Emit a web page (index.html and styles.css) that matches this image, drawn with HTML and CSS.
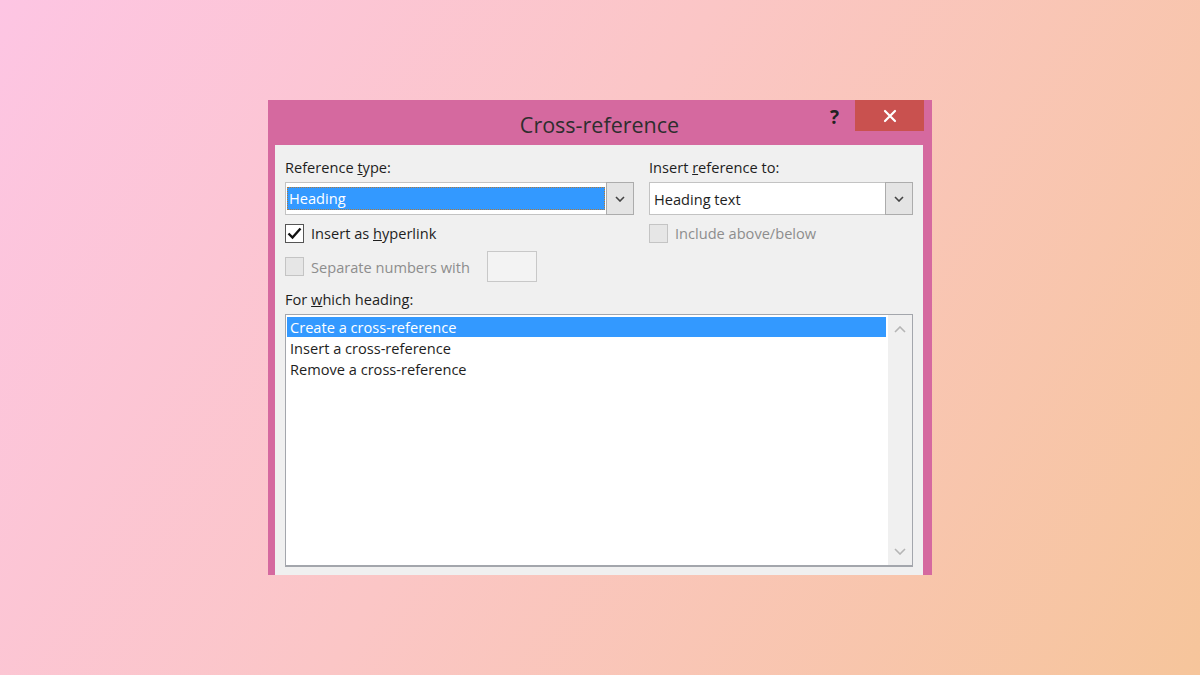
FILE: index.html
```html
<!DOCTYPE html>
<html lang="en">

<head>
  <meta charset="UTF-8">
  <meta name="viewport" content="width=device-width, initial-scale=1.0">
  <title>Cross-reference</title>
  <link rel="stylesheet" href="styles.css">
</head>

<body>
  <div class="dialog">
    <!-- Title bar -->
    <div class="title-bar">
      <span class="title">Cross-reference</span>
      <span class="help-btn">?</span>
      <span class="close-btn">
        <svg width="14" height="14" viewBox="0 0 14 14">
          <path d="M2 2 L12 12 M12 2 L2 12" stroke="#fff" stroke-width="2.2" stroke-linecap="round" />
        </svg>
      </span>
    </div>

    <div class="dialog-body">
      <div class="top-row">
        <div class="col col-left">
          <label class="field-label">Reference <u>t</u>ype:</label>
          <div class="combo">
            <div class="combo-value selected"><span>Heading</span></div>
            <div class="combo-btn">
              <svg width="10" height="6" viewBox="0 0 10 6">
                <path d="M1 1 L5 5 L9 1" fill="none" stroke="#444" stroke-width="1.6" />
              </svg>
            </div>
          </div>
          <div class="check-row">
            <span class="checkbox checked">
              <svg width="15" height="13" viewBox="0 0 15 13">
                <path d="M1.5 6.5 L5.5 10.5 L13.5 1.5" fill="none" stroke="#111" stroke-width="2.4" />
              </svg>
            </span>
            <span class="check-text">Insert as <u>h</u>yperlink</span>
          </div>
          <div class="check-row sep-row">
            <span class="checkbox disabled"></span>
            <span class="check-text muted">Separate numbers with</span>
            <span class="sep-input"></span>
          </div>
        </div>

        <div class="col col-right">
          <label class="field-label">Insert <u>r</u>eference to:</label>
          <div class="combo">
            <div class="combo-value">Heading text</div>
            <div class="combo-btn">
              <svg width="10" height="6" viewBox="0 0 10 6">
                <path d="M1 1 L5 5 L9 1" fill="none" stroke="#444" stroke-width="1.6" />
              </svg>
            </div>
          </div>
          <div class="check-row">
            <span class="checkbox disabled"></span>
            <span class="check-text muted">Include above/below</span>
          </div>
        </div>
      </div>

      <label class="field-label list-label">For <u>w</u>hich heading:</label>
      <div class="listbox">
        <ul class="list-items">
          <li class="active">Create a cross-reference</li>
          <li>Insert a cross-reference</li>
          <li>Remove a cross-reference</li>
        </ul>
        <div class="scrollbar">
          <svg width="12" height="7" viewBox="0 0 12 7">
            <path d="M1 6 L6 1 L11 6" fill="none" stroke="#b5b5b5" stroke-width="1.6" />
          </svg>
          <svg width="12" height="7" viewBox="0 0 12 7">
            <path d="M1 1 L6 6 L11 1" fill="none" stroke="#b5b5b5" stroke-width="1.6" />
          </svg>
        </div>
      </div>
    </div>
  </div>
</body>

</html>
```

FILE: styles.css
```css
/* General Styles */
body {
  font-family: 'Open Sans', 'Noto Sans', sans-serif;
  margin: 0;
  height: 675px;
  background: linear-gradient(120deg, #fdc5e3 0%, #fbc6c6 45%, #f6c59b 100%);
  display: flex;
  justify-content: center;
  align-items: center;
  overflow: hidden;
}

.dialog {
  width: 664px;
  height: 475px;
  background-color: #d5699f;
  display: flex;
  flex-direction: column;
  padding: 0 9px 0 7px;
  box-sizing: border-box;
}

/* Title bar */
.title-bar {
  height: 45px;
  position: relative;
  display: flex;
  justify-content: center;
  align-items: center;
  flex-shrink: 0;
}

.title {
  font-size: 21.5px;
  color: #2e2e2e;
  margin-top: 3px;
  margin-left: 1px;
}

.help-btn {
  position: absolute;
  right: 84px;
  top: 4px;
  font-size: 19px;
  font-weight: bold;
  color: #222;
}

.close-btn {
  position: absolute;
  right: -1px;
  top: 0;
  width: 69px;
  height: 31px;
  background-color: #c9514f;
  display: flex;
  justify-content: center;
  align-items: center;
}

/* Body */
.dialog-body {
  flex: 1;
  background-color: #f0f0f0;
  padding: 12px 10px 0 10px;
  display: flex;
  flex-direction: column;
  font-size: 14.6px;
  color: #1e1e1e;
}

.top-row {
  display: flex;
  gap: 15px;
}

.col {
  display: flex;
  flex-direction: column;
}

.col-left {
  width: 349px;
}

.col-right {
  flex: 1;
}

.field-label {
  height: 20px;
  line-height: 20px;
  margin-bottom: 5px;
}

/* Combo boxes */
.combo {
  height: 33px;
  display: flex;
  border: 1px solid #c3c3c3;
  background-color: #fff;
  box-sizing: border-box;
}

.combo-value {
  flex: 1;
  display: flex;
  align-items: center;
  padding-left: 4px;
}

.combo-value.selected {
  padding: 4px 1px;
}

.combo-value.selected span {
  display: block;
  width: 100%;
  height: 100%;
  line-height: 22px;
  background-color: #3399ff;
  color: #fff;
  padding-left: 2px;
  outline: 1px dotted #b07a3a;
  outline-offset: -1px;
  box-sizing: border-box;
}

.combo-btn {
  width: 26px;
  margin: -1px -1px -1px 0;
  background-color: #e4e4e4;
  border: 1px solid #acacac;
  display: flex;
  justify-content: center;
  align-items: center;
}

/* Checkboxes */
.check-row {
  display: flex;
  align-items: center;
  height: 20px;
  margin-top: 8px;
}

.sep-row {
  height: 31px;
  margin-top: 8px;
}

.checkbox {
  width: 19px;
  height: 19px;
  box-sizing: border-box;
  border: 1px solid #555;
  background-color: #fff;
  display: flex;
  justify-content: center;
  align-items: center;
  margin-right: 7px;
}

.checkbox.disabled {
  border-color: #c4c4c4;
  background-color: #e6e6e6;
}

.check-text {
  line-height: 20px;
}

.muted {
  color: #8d8d8d;
}

.sep-input {
  width: 50px;
  height: 31px;
  box-sizing: border-box;
  border: 1px solid #c8c8c8;
  background-color: #f3f3f3;
  margin-left: 17px;
}

.list-label {
  margin-top: 7px;
  margin-bottom: 5px;
}

/* List box */
.listbox {
  height: 253px;
  box-sizing: border-box;
  border: 1px solid #a3a6ac;
  border-bottom-width: 2px;
  background-color: #fff;
  display: flex;
  padding: 2px 1px 1px 1px;
}

.list-items {
  flex: 1;
  list-style: none;
  margin: 0;
  padding: 0;
}

.list-items li {
  height: 21px;
  line-height: 21px;
  padding-left: 3px;
}

.list-items li.active {
  background-color: #3399ff;
  color: #fff;
  height: 20px;
  line-height: 20px;
  margin-bottom: 1px;
}

.scrollbar {
  width: 24px;
  margin: -2px -1px -1px 2px;
  background-color: #f0f0f0;
  display: flex;
  flex-direction: column;
  justify-content: space-between;
  align-items: center;
  padding: 11px 0 10px 0;
}
```
